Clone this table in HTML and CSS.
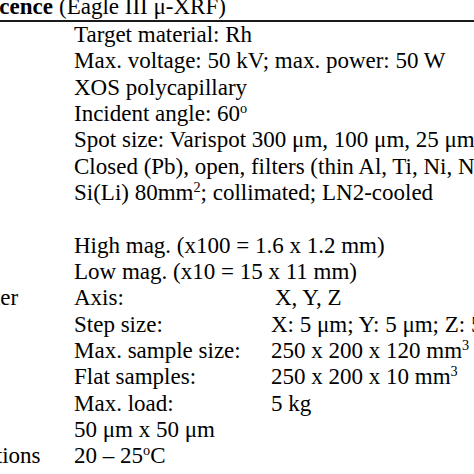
FILE: index.html
```html
<!DOCTYPE html>
<html lang="en">
<head>
<meta charset="utf-8">
<title>Eagle III μ-XRF</title>
<link rel="stylesheet" href="styles.css">
</head>
<body>
<div class="table">
  <div class="caption">
    <span class="lead"><b>X-ray fluorescence</b></span>
    <span class="rest">(Eagle III μ-XRF)</span>
  </div>
  <div class="rows">
    <div class="row"><div class="c1">X-ray tube</div><div class="c2">Target material: Rh</div></div>
    <div class="row"><div class="c1"></div><div class="c2">Max. voltage: 50 kV; max. power: 50 W</div></div>
    <div class="row"><div class="c1">Optics</div><div class="c2">XOS polycapillary</div></div>
    <div class="row"><div class="c1"></div><div class="c2">Incident angle: 60<sup>o</sup></div></div>
    <div class="row"><div class="c1"></div><div class="c2">Spot size: Varispot 300 μm, 100 μm, 25 μm</div></div>
    <div class="row"><div class="c1">Filters</div><div class="c2">Closed (Pb), open, filters (thin Al, Ti, Ni, Nb)</div></div>
    <div class="row"><div class="c1">Detector</div><div class="c2">Si(Li) 80mm<sup>2</sup>; collimated; LN2-cooled</div></div>
    <div class="row"><div class="c1">Camera</div><div class="c2"></div></div>
    <div class="row"><div class="c1"></div><div class="c2">High mag. (x100 = 1.6 x 1.2 mm)</div></div>
    <div class="row"><div class="c1"></div><div class="c2">Low mag. (x10 = 15 x 11 mm)</div></div>
    <div class="row"><div class="c1">Motorised holder</div><div class="c2 sub"><span class="k">Axis:</span><span class="v indent">X, Y, Z</span></div></div>
    <div class="row"><div class="c1"></div><div class="c2 sub"><span class="k">Step size:</span><span class="v">X: 5 μm; Y: 5 μm; Z: 5 μm</span></div></div>
    <div class="row"><div class="c1"></div><div class="c2 sub"><span class="k">Max. sample size:</span><span class="v">250 x 200 x 120 mm<sup>3</sup></span></div></div>
    <div class="row"><div class="c1"></div><div class="c2 sub"><span class="k">Flat samples:</span><span class="v">250 x 200 x 10 mm<sup>3</sup></span></div></div>
    <div class="row"><div class="c1"></div><div class="c2 sub"><span class="k">Max. load:</span><span class="v">5 kg</span></div></div>
    <div class="row"><div class="c1">Pixel size</div><div class="c2">50 μm x 50 μm</div></div>
    <div class="row"><div class="c1">Working conditions</div><div class="c2">20 – 25<sup>o</sup>C</div></div>
  </div>
</div>
</body>
</html>
```
FILE: styles.css
```css
html, body {
  margin: 0;
  padding: 0;
  background: #ffffff;
  overflow: hidden;
}

body {
  width: 474px;
  height: 474px;
  font-family: "Liberation Serif", "Times New Roman", serif;
  font-size: 23px;
  color: #000000;
}

.table {
  margin-left: -141px;
  margin-top: -6px;
  width: 760px;
}

.caption {
  display: flex;
  white-space: nowrap;
  line-height: 26px;
  border-bottom: 2px solid #1a1a1a;
}

.lead {
  width: 194px;
  flex: none;
  display: flex;
  justify-content: flex-end;
}

.rest {
  margin-left: 6px;
}

.rows {
  display: flex;
  flex-direction: column;
}

.row {
  display: flex;
  white-space: nowrap;
  line-height: 26.34px;
  height: 26.34px;
}

.c1 {
  width: 215px;
  flex: none;
}

.c2 {
  flex: none;
}

.sub {
  display: flex;
}

.sub .k {
  width: 197px;
  flex: none;
}

.sub .indent {
  padding-left: 4px;
}

sup {
  font-size: 0.62em;
  line-height: 0;
  vertical-align: 0.55em;
}
```
